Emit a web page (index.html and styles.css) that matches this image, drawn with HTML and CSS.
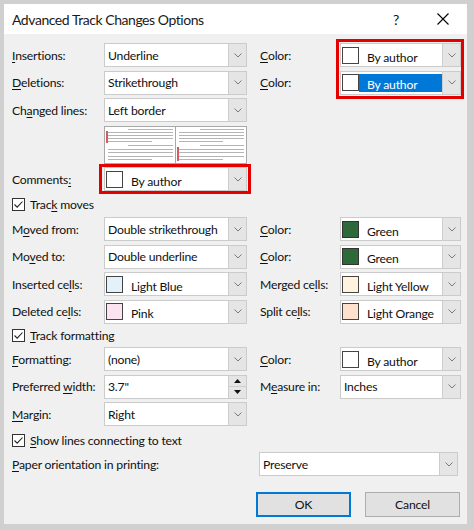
FILE: index.html
```html
<!DOCTYPE html>
<html>
<head>
<meta charset="utf-8">
<link rel="stylesheet" href="styles.css">
</head>
<body>
<div class="window">
  <div class="titlebar">
    <span class="title">Advanced Track Changes Options</span>
    <span class="help">?</span>
    <span class="close"><svg width="12" height="12" viewBox="0 0 12 12"><path d="M0.5 0.5 L11.5 11.5 M11.5 0.5 L0.5 11.5" stroke="#000" stroke-width="1.1" fill="none"/></svg></span>
  </div>
  <div class="body">
    <div class="top">
      <div class="top-left">
        <div class="row"><span class="lbl"><u>I</u>nsertions:</span><div class="dd"><span class="txt">Underline</span><span class="arrow"><svg width="8" height="5" viewBox="0 0 8 5"><path d="M0.5 0.5 L4 4 L7.5 0.5" stroke="#7a7a7a" fill="none"/></svg></span></div></div>
        <div class="row"><span class="lbl"><u>D</u>eletions:</span><div class="dd"><span class="txt">Strikethrough</span><span class="arrow"><svg width="8" height="5" viewBox="0 0 8 5"><path d="M0.5 0.5 L4 4 L7.5 0.5" stroke="#7a7a7a" fill="none"/></svg></span></div></div>
        <div class="row"><span class="lbl">Ch<u>a</u>nged lines:</span><div class="dd"><span class="txt">Left border</span><span class="arrow"><svg width="8" height="5" viewBox="0 0 8 5"><path d="M0.5 0.5 L4 4 L7.5 0.5" stroke="#7a7a7a" fill="none"/></svg></span></div></div>
        <div class="preview">
          <svg width="143" height="38" viewBox="0 0 143 38">
            <rect x="0.5" y="0.5" width="71" height="37" fill="#fff" stroke="#a8a8a8"/>
            <rect x="71.5" y="0.5" width="71" height="37" fill="#fff" stroke="#a8a8a8"/>
            <g stroke="#b4b4b4" stroke-width="1">
              <path d="M24 3.5 H69 M4 6.5 H69 M4 9.5 H69 M4 12.5 H69 M4 15.5 H48 M24 19.5 H69 M4 23.5 H69 M4 26.5 H69 M4 30.5 H69 M4 33.5 H48"/>
              <path d="M96 3.5 H140 M75 6.5 H140 M75 9.5 H140 M75 12.5 H140 M75 15.5 H119 M96 19.5 H140 M75 23.5 H140 M75 26.5 H140 M75 30.5 H140 M75 33.5 H119"/>
            </g>
            <path d="M3 5 V17" stroke="#c0282d" stroke-width="1.5"/>
            <path d="M74 21 V35" stroke="#c0282d" stroke-width="1.5"/>
          </svg>
        </div>
        <div class="row"><span class="lbl">Comments<u>:</u></span>
          <div class="redwrap"><div class="dd sw"><span class="txt"><span class="swatch white"></span><span class="swtext">By author</span></span><span class="arrow"><svg width="8" height="5" viewBox="0 0 8 5"><path d="M0.5 0.5 L4 4 L7.5 0.5" stroke="#7a7a7a" fill="none"/></svg></span></div></div>
        </div>
      </div>
      <div class="top-right">
        <div class="rlabels">
          <span class="rlbl"><u>C</u>olor:</span>
          <span class="rlbl"><u>C</u>olor:</span>
        </div>
        <div class="redbox">
          <div class="dd sw small"><span class="txt"><span class="swatch white"></span><span class="swtext">By author</span></span><span class="arrow"><svg width="8" height="5" viewBox="0 0 8 5"><path d="M0.5 0.5 L4 4 L7.5 0.5" stroke="#7a7a7a" fill="none"/></svg></span></div>
          <div class="dd sw small"><span class="txt"><span class="swatch white"></span><span class="swtext selected">By author</span></span><span class="arrow"><svg width="8" height="5" viewBox="0 0 8 5"><path d="M0.5 0.5 L4 4 L7.5 0.5" stroke="#7a7a7a" fill="none"/></svg></span></div>
        </div>
      </div>
    </div>

    <div class="check-row moves"><span class="cb"><svg width="11" height="11" viewBox="0 0 11 11"><path d="M1.5 5.5 L4.2 8.2 L9.5 2.5" stroke="#222" stroke-width="1.1" fill="none"/></svg></span><span>Trac<u>k</u> moves</span></div>

    <div class="grid">
      <span class="lbl">M<u>o</u>ved from:</span>
      <div class="dd"><span class="txt">Double strikethrough</span><span class="arrow"><svg width="8" height="5" viewBox="0 0 8 5"><path d="M0.5 0.5 L4 4 L7.5 0.5" stroke="#7a7a7a" fill="none"/></svg></span></div>
      <span class="lbl rl"><u>C</u>olor:</span>
      <div class="dd sw small"><span class="txt"><span class="swatch green"></span><span class="swtext">Green</span></span><span class="arrow"><svg width="8" height="5" viewBox="0 0 8 5"><path d="M0.5 0.5 L4 4 L7.5 0.5" stroke="#7a7a7a" fill="none"/></svg></span></div>

      <span class="lbl">Mo<u>v</u>ed to:</span>
      <div class="dd"><span class="txt">Double underline</span><span class="arrow"><svg width="8" height="5" viewBox="0 0 8 5"><path d="M0.5 0.5 L4 4 L7.5 0.5" stroke="#7a7a7a" fill="none"/></svg></span></div>
      <span class="lbl rl"><u>C</u>olor:</span>
      <div class="dd sw small"><span class="txt"><span class="swatch green"></span><span class="swtext">Green</span></span><span class="arrow"><svg width="8" height="5" viewBox="0 0 8 5"><path d="M0.5 0.5 L4 4 L7.5 0.5" stroke="#7a7a7a" fill="none"/></svg></span></div>

      <span class="lbl">Inserted ce<u>l</u>ls:</span>
      <div class="dd sw"><span class="txt"><span class="swatch lblue"></span><span class="swtext">Light Blue</span></span><span class="arrow"><svg width="8" height="5" viewBox="0 0 8 5"><path d="M0.5 0.5 L4 4 L7.5 0.5" stroke="#7a7a7a" fill="none"/></svg></span></div>
      <span class="lbl rl">Merged ce<u>l</u>ls:</span>
      <div class="dd sw small"><span class="txt"><span class="swatch lyellow"></span><span class="swtext">Light Yellow</span></span><span class="arrow"><svg width="8" height="5" viewBox="0 0 8 5"><path d="M0.5 0.5 L4 4 L7.5 0.5" stroke="#7a7a7a" fill="none"/></svg></span></div>

      <span class="lbl">Deleted ce<u>l</u>ls:</span>
      <div class="dd sw"><span class="txt"><span class="swatch pink"></span><span class="swtext">Pink</span></span><span class="arrow"><svg width="8" height="5" viewBox="0 0 8 5"><path d="M0.5 0.5 L4 4 L7.5 0.5" stroke="#7a7a7a" fill="none"/></svg></span></div>
      <span class="lbl rl">Split ce<u>l</u>ls:</span>
      <div class="dd sw small"><span class="txt"><span class="swatch lorange"></span><span class="swtext">Light Orange</span></span><span class="arrow"><svg width="8" height="5" viewBox="0 0 8 5"><path d="M0.5 0.5 L4 4 L7.5 0.5" stroke="#7a7a7a" fill="none"/></svg></span></div>
    </div>

    <div class="check-row fmt"><span class="cb"><svg width="11" height="11" viewBox="0 0 11 11"><path d="M1.5 5.5 L4.2 8.2 L9.5 2.5" stroke="#222" stroke-width="1.1" fill="none"/></svg></span><span><u>T</u>rack formatting</span></div>

    <div class="grid">
      <span class="lbl"><u>F</u>ormatting:</span>
      <div class="dd"><span class="txt">(none)</span><span class="arrow"><svg width="8" height="5" viewBox="0 0 8 5"><path d="M0.5 0.5 L4 4 L7.5 0.5" stroke="#7a7a7a" fill="none"/></svg></span></div>
      <span class="lbl rl"><u>C</u>olor:</span>
      <div class="dd sw small"><span class="txt"><span class="swatch white"></span><span class="swtext">By author</span></span><span class="arrow"><svg width="8" height="5" viewBox="0 0 8 5"><path d="M0.5 0.5 L4 4 L7.5 0.5" stroke="#7a7a7a" fill="none"/></svg></span></div>

      <span class="lbl">Preferred <u>w</u>idth:</span>
      <div class="dd"><span class="txt">3.7"</span><span class="spin"><span class="half"><svg width="7" height="4" viewBox="0 0 7 4"><path d="M0 4 L3.5 0 L7 4 Z" fill="#111"/></svg></span><span class="half"><svg width="7" height="4" viewBox="0 0 7 4"><path d="M0 0 L3.5 4 L7 0 Z" fill="#111"/></svg></span></span></div>
      <span class="lbl rl">M<u>e</u>asure in:</span>
      <div class="dd small"><span class="txt">Inches</span><span class="arrow"><svg width="8" height="5" viewBox="0 0 8 5"><path d="M0.5 0.5 L4 4 L7.5 0.5" stroke="#7a7a7a" fill="none"/></svg></span></div>

      <span class="lbl"><u>M</u>argin:</span>
      <div class="dd"><span class="txt">Right</span><span class="arrow"><svg width="8" height="5" viewBox="0 0 8 5"><path d="M0.5 0.5 L4 4 L7.5 0.5" stroke="#7a7a7a" fill="none"/></svg></span></div>
    </div>

    <div class="check-row lines"><span class="cb"><svg width="11" height="11" viewBox="0 0 11 11"><path d="M1.5 5.5 L4.2 8.2 L9.5 2.5" stroke="#222" stroke-width="1.1" fill="none"/></svg></span><span><u>S</u>how lines connecting to text</span></div>

    <div class="paper-row">
      <span class="paper-lbl"><u>P</u>aper orientation in printing:</span>
      <div class="dd wide"><span class="txt">Preserve</span><span class="arrow"><svg width="8" height="5" viewBox="0 0 8 5"><path d="M0.5 0.5 L4 4 L7.5 0.5" stroke="#7a7a7a" fill="none"/></svg></span></div>
    </div>

    <div class="buttons">
      <span class="btn default">OK</span>
      <span class="btn">Cancel</span>
    </div>
  </div>
</div>
</body>
</html>
```

FILE: styles.css
```css
* { box-sizing: border-box; }
html, body { margin: 0; padding: 0; }
body {
  width: 474px;
  height: 530px;
  overflow: hidden;
  background: #d2d2d2;
  font-family: "Lato", "Noto Sans", sans-serif;
  font-size: 12.2px;
  letter-spacing: -0.2px;
  color: #111;
}
u { text-decoration-thickness: 1px; text-underline-offset: 2px; }

.window {
  width: 474px;
  height: 530px;
  border-style: solid;
  border-color: #d0d0d0;
  border-width: 4px 7px 6px 4px;
  background: #f0f0f0;
  display: flex;
  flex-direction: column;
}

.titlebar {
  flex: none;
  height: 30px;
  background: #fff;
  display: flex;
  align-items: center;
  padding-left: 8px;
}
.title { flex: 1; font-size: 14px; letter-spacing: -0.45px; color: #1a1a1a; }
.help { width: 46px; text-align: center; font-size: 14px; }
.close { width: 48px; display: flex; justify-content: center; align-items: center; }

.body { flex: 1; padding: 9px 6px 0 8px; }

.top { display: flex; }
.top-left { width: 235px; display: flex; flex-direction: column; gap: 3.5px; }
.row { display: flex; align-items: center; height: 24px; }
.lbl { width: 92px; flex: none; white-space: nowrap; }

.dd {
  width: 143px;
  height: 24px;
  flex: none;
  display: flex;
  background: #fff;
  border: 1px solid #cbcbcb;
}
.dd.small { width: 121px; }
.dd.wide { width: 199px; }
.dd .txt {
  flex: 1;
  display: flex;
  align-items: center;
  padding-left: 3px;
  white-space: nowrap;
  overflow: hidden;
}
.dd .arrow {
  width: 18px;
  flex: none;
  background: #e5e5e5;
  border-left: 1px solid #cdcdcd;
  display: flex;
  align-items: center;
  justify-content: center;
}
.dd.sw .txt { padding-left: 1px; align-items: stretch; }
.swatch {
  width: 17px;
  height: 17px;
  flex: none;
  align-self: center;
  border: 1px solid #444;
  margin-right: 8px;
}
.swtext { display: flex; align-items: center; padding-top: 4px; flex: 1; }
.swtext.selected {
  background: #0078d7;
  color: #fff;
  margin: 2px 0 2px -8px;
  padding-left: 8px;
}
.swatch.white { background: #fff; }
.swatch.green { background: #2e6a39; border-color: #333; }
.swatch.lblue { background: #e3f1fb; }
.swatch.pink { background: #fbe3ef; }
.swatch.lyellow { background: #fff3df; }
.swatch.lorange { background: #fde1cc; }

.preview { margin-left: 92px; width: 143px; height: 38px; }
.preview svg { display: block; }

.redwrap {
  border: 3px solid #e50000;
  margin: -3px -4px -3px -5px;
  padding: 0 1px 0 2px;
}

.top-right { margin-left: 13px; display: flex; align-items: flex-start; }
.rlabels { width: 76px; display: flex; flex-direction: column; gap: 3.5px; }
.rlbl { height: 24px; display: flex; align-items: center; white-space: nowrap; }
.redbox {
  margin-top: -4px;
  border: 3px solid #e50000;
  padding: 1px 0 1px 1px;
  display: flex;
  flex-direction: column;
  gap: 3.5px;
}

.check-row { display: flex; align-items: center; gap: 5px; white-space: nowrap; }
.check-row.moves { height: 26px; }
.check-row.fmt { height: 23.5px; }
.check-row.lines { height: 24px; margin-top: 2px; }
.cb {
  width: 13px;
  height: 13px;
  border: 1px solid #333;
  background: #fff;
  display: flex;
  align-items: center;
  justify-content: center;
}

.grid {
  display: grid;
  grid-template-columns: 92px 143px 93px 121px;
  grid-auto-rows: 24px;
  row-gap: 3.5px;
  align-items: center;
}
.grid .lbl.rl { width: auto; padding-left: 13px; }

.spin {
  width: 18px;
  flex: none;
  display: flex;
  flex-direction: column;
  border-left: 1px solid #cdcdcd;
}
.spin .half {
  flex: 1;
  background: #e5e5e5;
  display: flex;
  align-items: center;
  justify-content: center;
}
.spin .half + .half { border-top: 1px solid #cdcdcd; }

.paper-row { display: flex; align-items: center; height: 24px; }
.paper-lbl { width: 247px; flex: none; }

.buttons {
  margin-top: 16px;
  display: flex;
  justify-content: flex-end;
  gap: 14px;
  padding-right: 1px;
}
.btn {
  width: 95px;
  height: 25px;
  background: #e1e1e1;
  border: 1px solid #adadad;
  display: flex;
  align-items: center;
  justify-content: center;
}
.btn.default { border: 2px solid #0078d7; }
```
